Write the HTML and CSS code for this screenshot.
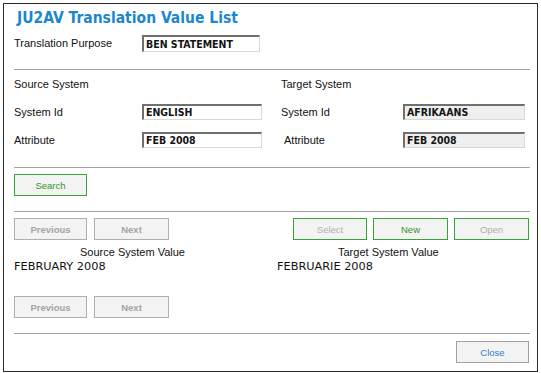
FILE: index.html
```html
<!DOCTYPE html>
<html>
<head>
<meta charset="utf-8">
<link rel="stylesheet" href="styles.css">
</head>
<body>
<div class="dialog">
  <h1 class="title">JU2AV Translation Value List</h1>
  <div class="row purpose">
    <span class="label">Translation Purpose</span>
    <span class="field w118">BEN STATEMENT</span>
  </div>
  <div class="rule r1"></div>
  <div class="systems">
    <div class="col left">
      <div class="head">Source System</div>
      <div class="row r-id"><span class="label">System Id</span><span class="field w120">ENGLISH</span></div>
      <div class="row r-attr"><span class="label">Attribute</span><span class="field w120">FEB 2008</span></div>
    </div>
    <div class="col right">
      <div class="head">Target System</div>
      <div class="row r-id"><span class="label">System Id</span><span class="field w122 ro">AFRIKAANS</span></div>
      <div class="row r-attr"><span class="label shift">Attribute</span><span class="field w122 ro">FEB 2008</span></div>
    </div>
  </div>
  <div class="rule r2"></div>
  <div class="btnrow b-search"><button class="btn green">Search</button></div>
  <div class="rule r3"></div>
  <div class="btnrow b-nav">
    <div class="group">
      <button class="btn gray w73">Previous</button>
      <button class="btn gray w75">Next</button>
    </div>
    <div class="group rightgroup">
      <button class="btn green dim w74">Select</button>
      <button class="btn green w75">New</button>
      <button class="btn green dim w75">Open</button>
    </div>
  </div>
  <div class="values">
    <div class="vcol vleft">
      <div class="vhead">Source System Value</div>
      <div class="vval">FEBRUARY 2008</div>
    </div>
    <div class="vcol vright">
      <div class="vhead">Target System Value</div>
      <div class="vval">FEBRUARIE 2008</div>
    </div>
  </div>
  <div class="btnrow b-nav2">
    <div class="group">
      <button class="btn gray w73">Previous</button>
      <button class="btn gray w75">Next</button>
    </div>
  </div>
  <div class="rule r4"></div>
  <div class="btnrow b-close"><button class="btn close w73">Close</button></div>
</div>
</body>
</html>
```

FILE: styles.css
```css
html, body {
  margin: 0;
  padding: 0;
  background: #ffffff;
}
body {
  font-family: "Liberation Sans", Arial, sans-serif;
  font-size: 11px;
  color: #111;
}
.dialog {
  box-sizing: border-box;
  margin: 3px 0 0 3px;
  width: 535px;
  height: 369px;
  border: 1px solid #2a2a2a;
  padding: 0 6px 0 10px;
}
.title {
  margin: 0;
  padding: 4px 0 0 3px;
  height: 27px;
  box-sizing: border-box;
  font-family: "DejaVu Sans Condensed", "DejaVu Sans", Verdana, sans-serif;
  font-weight: bold;
  font-size: 15.5px;
  line-height: 20px;
  color: #1b87cc;
}
.row {
  display: flex;
  align-items: center;
}
.label {
  display: inline-block;
  width: 128px;
  line-height: 14px;
}
.right .label { width: 122px; }
.label.shift { padding-left: 3px; width: 119px; }
.purpose {
  margin-top: 4px;
  height: 17px;
}
.purpose .label { margin-top: -1px; }
.field {
  box-sizing: border-box;
  display: inline-block;
  height: 16px;
  border-top: 2px solid #707070;
  border-left: 2px solid #707070;
  border-right: 1px solid #d8d8d8;
  border-bottom: 1px solid #d8d8d8;
  padding-left: 2px;
  font-family: "DejaVu Sans Condensed", "DejaVu Sans", Verdana, sans-serif;
  font-weight: bold;
  font-size: 10.5px;
  line-height: 13px;
  color: #141414;
  background: #fff;
  white-space: nowrap;
}
.purpose .field { height: 17px; line-height: 14px; }
.field.ro { background: #efefef; }
.w118 { width: 118px; }
.w120 { width: 120px; }
.w122 { width: 122px; }
.rule {
  height: 1px;
  background: #a3a3a3;
  width: 516px;
}
.r1 { margin-top: 17px; }
.systems {
  display: flex;
}
.col.left { width: 267px; }
.head {
  margin-top: 7px;
  line-height: 14px;
  height: 14px;
}
.r-id { margin-top: 13px; height: 16px; }
.r-attr { margin-top: 12px; height: 16px; }
.r-id .label, .r-attr .label { margin-top: -1px; }
.r2 { margin-top: 19px; }
.btnrow {
  display: flex;
  justify-content: space-between;
}
.b-search { margin-top: 6px; }
.r3 { margin-top: 15px; }
.b-nav { margin-top: 6px; width: 515px; }
.group { display: flex; gap: 7px; }
.rightgroup { gap: 6px; }
.btn {
  box-sizing: border-box;
  height: 22px;
  width: 73px;
  padding: 0;
  margin: 0;
  font-family: "Liberation Sans", Arial, sans-serif;
  font-size: 9.5px;
  background: #f3f3f3;
  border: 1px solid #a8a8a8;
  color: #9a9a9a;
}
.w73 { width: 73px; }
.w74 { width: 74px; }
.w75 { width: 75px; }
.btn.green {
  border-color: #3aa23a;
  color: #2e962e;
}
.btn.green.dim { color: #b0b0b0; }
.btn.gray {
  color: #a4a4a4;
  font-weight: bold;
  border-color: #b0b0b0;
}
.btn.close {
  color: #2f7fc6;
  border-color: #a0a0a0;
}
.values {
  display: flex;
  margin-top: 6px;
}
.vcol.vleft { width: 263px; }
.vhead {
  line-height: 13px;
  font-size: 11px;
}
.vleft .vhead { padding-left: 66px; }
.vright .vhead { padding-left: 61px; }
.vval {
  font-family: "DejaVu Sans", Verdana, sans-serif;
  font-size: 11.3px;
  line-height: 15px;
  color: #111;
}
.b-nav2 { margin-top: 22px; }
.r4 { margin-top: 15px; }
.b-close { margin-top: 7px; justify-content: flex-end; width: 515px; }
```
